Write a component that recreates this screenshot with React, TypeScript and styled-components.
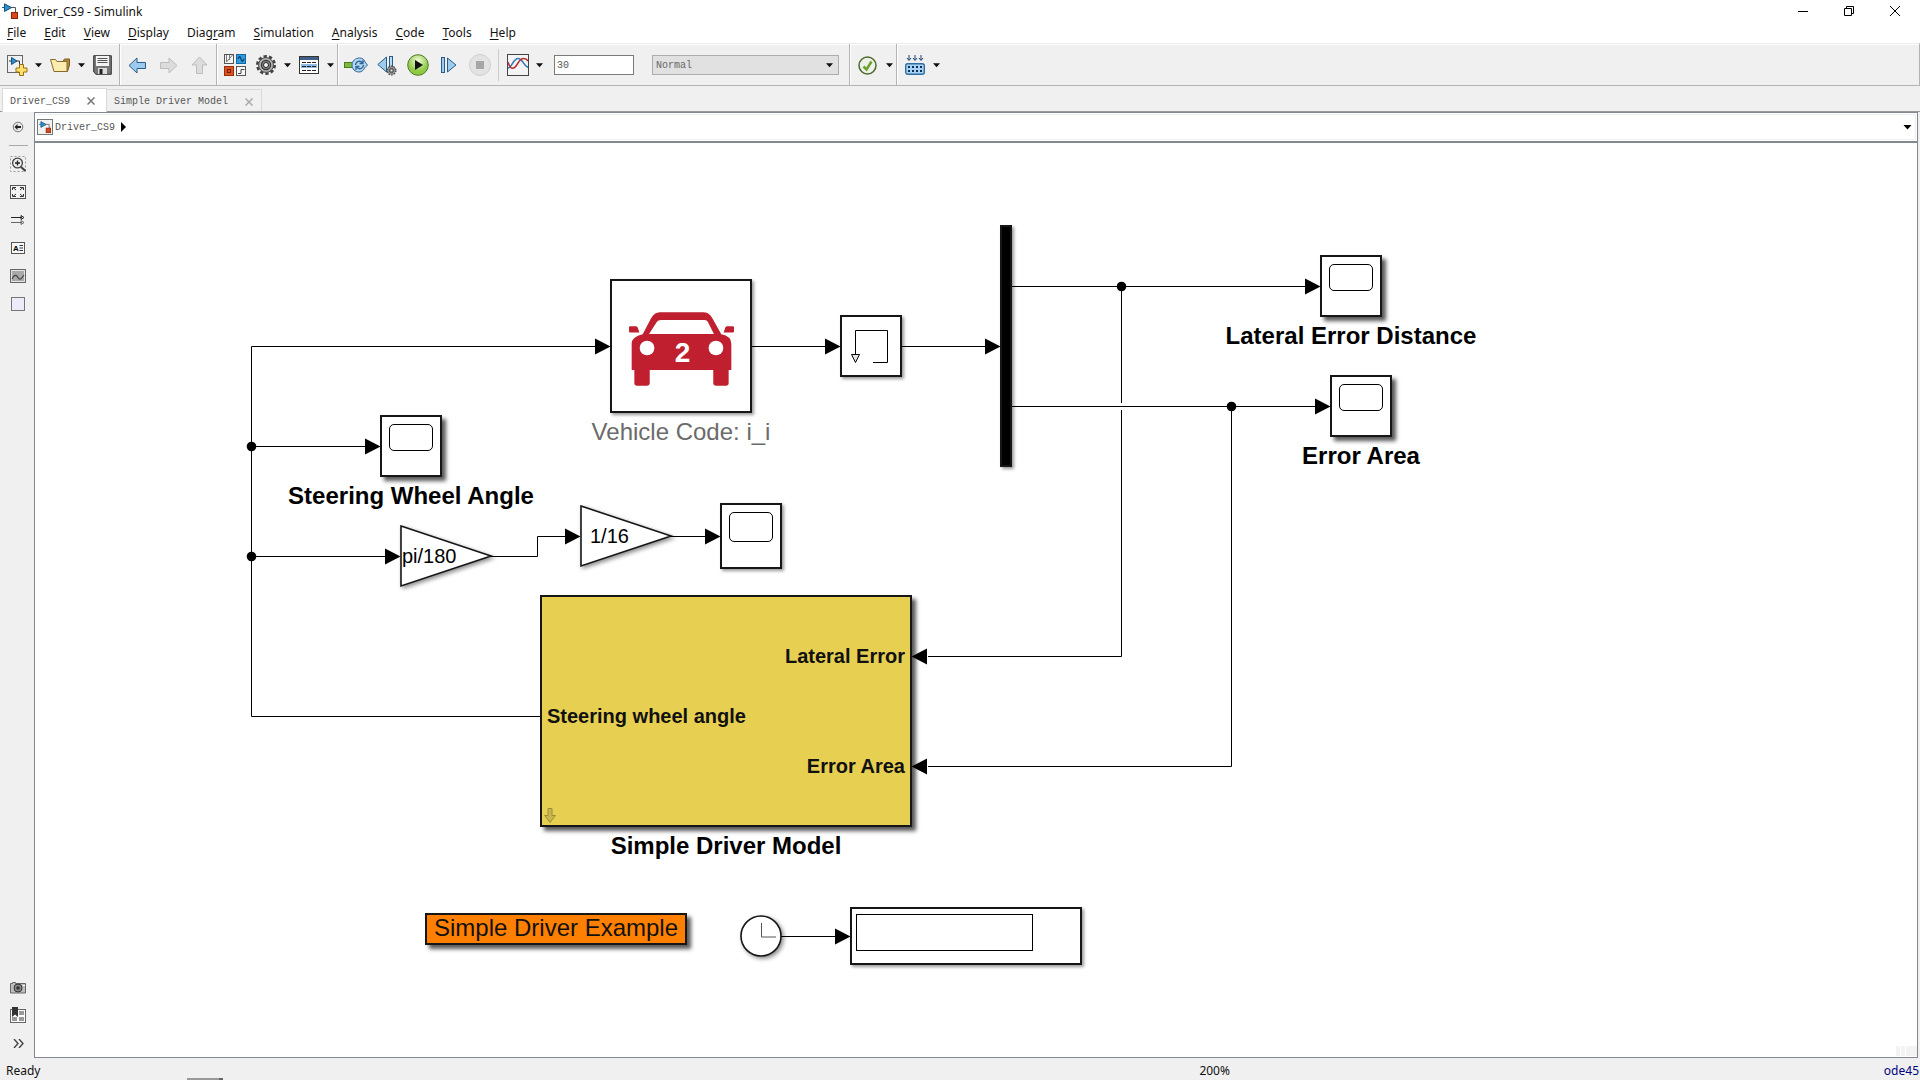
import React from "react";
import styled, { createGlobalStyle, css } from "styled-components";

const uiFont = `"Noto Sans", "Open Sans", sans-serif`;
const monoFont = `"Liberation Mono", "DejaVu Sans Mono", monospace`;
const modelFont = `"Liberation Sans", Arial, sans-serif`;

const GlobalStyle = createGlobalStyle`
  * { box-sizing: border-box; }
  body { margin: 0; background: #f0f0f0; font-family: ${uiFont}; font-size: 12px; color: #111; }
  button, input, select { font: inherit; color: inherit; }
  svg { display: block; }
`;

/* ---------- window frame ---------- */

const Window = styled.div`
  display: flex;
  flex-direction: column;
  height: 100vh;
  overflow: hidden;
  background: #f0f0f0;
`;

const TitleBar = styled.header`
  display: flex;
  align-items: center;
  height: 22px;
  padding: 0 2px;
  background: #fff;
`;

const Title = styled.h1`
  flex: 1;
  margin: 2px 0 0 5px;
  font-size: 12px;
  font-weight: 400;
  line-height: 20px;
`;

const PlainButton = styled.button`
  display: flex;
  align-items: center;
  justify-content: center;
  padding: 0;
  border: 0;
  background: transparent;
`;

const WindowButton = styled(PlainButton)`
  width: 46px;
  height: 20px;
`;

const MenuBar = styled.nav`
  display: flex;
  gap: 18px;
  height: 21px;
  padding: 1px 7px 0;
  background: #fff;
`;

const MenuButton = styled(PlainButton)`
  line-height: 20px;
  u {
    text-underline-offset: 2px;
  }
`;

/* ---------- toolbar ---------- */

const Toolbar = styled.div`
  display: flex;
  height: 43px;
  border-top: 1px solid #ececec;
  border-right: 1px solid #b4b4b4;
  border-bottom: 1px solid #b4b4b4;
  box-shadow: inset 0 1px #fff;
`;

const Group = styled.div<{ $last?: boolean }>`
  display: flex;
  align-items: center;
  padding: 1px 1px 0;
  ${(p) =>
    !p.$last &&
    css`
      border-right: 1px solid #fff;
      box-shadow: inset -1px 0 #b4b4b4;
      padding-right: 2px;
    `}
`;

const ToolButton = styled(PlainButton)`
  width: 31px;
  height: 32px;
`;

const CaretButton = styled(PlainButton)`
  width: 12px;
  height: 32px;
`;

const Divider = styled.span`
  width: 1px;
  height: 32px;
  margin: 0 3px;
  background: #ccc;
`;

const StopTime = styled.input`
  width: 80px;
  height: 20px;
  margin: 0 18px 0 9px;
  padding: 0 2px;
  border: 1px solid #7a7a7a;
  background: #fff;
  color: #555;
  font-family: ${monoFont};
  font-size: 10px;
`;

const ModeBox = styled.div`
  display: grid;
  align-items: center;
  width: 187px;
  height: 20px;
  margin-right: 9px;
  border: 1px solid #adadad;
  background: #e1e1e1;
  & > * {
    grid-area: 1 / 1;
  }
  svg {
    justify-self: end;
    margin-right: 5px;
    pointer-events: none;
  }
`;

const ModeSelect = styled.select`
  width: 100%;
  height: 18px;
  padding: 0 3px;
  border: 0;
  appearance: none;
  background: transparent;
  color: #666;
  font-family: ${monoFont};
  font-size: 10px;
`;

/* ---------- tabs and path ---------- */

const TabStrip = styled.div`
  display: flex;
  align-items: flex-end;
  height: 26px;
  padding-left: 2px;
  box-shadow: inset 0 -1px #999;
`;

const Tab = styled.div<{ $active?: boolean }>`
  display: flex;
  align-items: center;
  justify-content: space-between;
  width: ${(p) => (p.$active ? 105 : 155)}px;
  height: ${(p) => (p.$active ? 24 : 22)}px;
  margin-bottom: ${(p) => (p.$active ? 0 : 1)}px;
  padding: ${(p) => (p.$active ? "1px 11px 0 7px" : "2px 8px 0 7px")};
  border: 1px solid #d9d9d9;
  border-bottom: 0;
  border-left-width: ${(p) => (p.$active ? 1 : 0)}px;
  background: ${(p) => (p.$active ? "#fff" : "#f0f0f0")};
`;

const MonoButton = styled(PlainButton)`
  color: #555;
  font-family: ${monoFont};
  font-size: 10px;
`;

const Body = styled.div`
  display: flex;
  flex: 1;
  min-height: 0;
  padding-right: 2px;
`;

const Palette = styled.aside`
  display: flex;
  flex-direction: column;
  align-items: center;
  gap: 8px;
  width: 34px;
  padding: 5px 0 5px 2px;
`;

const PaletteButton = styled(PlainButton)`
  width: 24px;
  height: 20px;
`;

const PaletteRule = styled.hr`
  width: 19px;
  margin: 0;
  border: 0;
  border-top: 1px solid #aaa;
`;

const Spacer = styled.div`
  flex: 1;
`;

const Editor = styled.main`
  display: flex;
  flex: 1;
  flex-direction: column;
  min-width: 0;
  border: 1px solid #828790;
`;

const PathBar = styled.div`
  height: 30px;
  padding: 1px;
  border-bottom: 2px solid #828790;
  background: #fff;
`;

const PathInner = styled.div`
  display: flex;
  align-items: center;
  height: 26px;
  padding: 0 3px 0 1px;
  border: 1px solid #f0f0f0;
  border-left: 0;
  gap: 2px;
`;

/* ---------- diagram ---------- */

const Canvas = styled.div`
  position: relative;
  flex: 1;
  overflow: hidden;
  background: #fff;
  font-family: ${modelFont};
`;

const Wires = styled.svg`
  position: absolute;
  left: 0;
  top: 0;
`;

const shadows = {
  soft: "2px 2px 3px rgba(0,0,0,.4)",
  deep: "4px 4px 4px rgba(0,0,0,.65)",
};

type Place = { $x: number; $y: number };
type Box = Place & { $w: number; $h: number };

const Block = styled.div<Box & { $shadow?: keyof typeof shadows; $fill?: string }>`
  position: absolute;
  left: ${(p) => p.$x}px;
  top: ${(p) => p.$y}px;
  width: ${(p) => p.$w}px;
  height: ${(p) => p.$h}px;
  border: 2px solid #161616;
  background: ${(p) => p.$fill ?? "#fff"};
  box-shadow: ${(p) => shadows[p.$shadow ?? "soft"]};
`;

const CenteredBlock = styled(Block)`
  display: flex;
  align-items: center;
  justify-content: center;
`;

const VehicleBlock = styled(CenteredBlock)`
  padding-top: 6px;
`;

const ScopeBlock = styled(Block)`
  padding: 7px;
`;

const ScopeScreen = styled.div<{ $h: number }>`
  height: ${(p) => p.$h}px;
  border: 1px solid #000;
  border-radius: 5px;
`;

const DisplayBlock = styled(Block)`
  padding: 5px 4px;
`;

const DisplayValue = styled.output`
  display: block;
  width: 177px;
  height: 37px;
  border: 1px solid #000;
`;

const Annotation = styled(CenteredBlock)`
  padding-bottom: 2px;
  font-size: 24px;
  line-height: 28px;
  color: #111;
`;

const Subsystem = styled(Block)`
  display: flex;
  flex-direction: column;
  padding: 47px 5px 1px;
  font-size: 20px;
  font-weight: 700;
  line-height: 24px;
`;

const Port = styled.div<{ $side: "left" | "right"; $gap: number }>`
  margin-bottom: ${(p) => p.$gap}px;
  text-align: ${(p) => p.$side};
`;

const LinkBadge = styled.svg`
  position: absolute;
  left: 1px;
  bottom: 1px;
`;

const Label = styled.div<Place & { $muted?: boolean }>`
  position: absolute;
  left: ${(p) => p.$x}px;
  top: ${(p) => p.$y}px;
  transform: translateX(-50%);
  font-size: 24px;
  font-weight: ${(p) => (p.$muted ? 400 : 700)};
  line-height: 28px;
  color: ${(p) => (p.$muted ? "#6b6b6b" : "#000")};
  white-space: nowrap;
`;

const GainSvg = styled.svg<Place>`
  position: absolute;
  left: ${(p) => p.$x}px;
  top: ${(p) => p.$y}px;
  overflow: visible;
  polygon,
  circle {
    fill: #fff;
    stroke: #161616;
    stroke-width: 1.6;
    filter: drop-shadow(2px 2px 2px rgba(0, 0, 0, 0.45));
  }
  text {
    font-size: 20px;
    fill: #000;
  }
`;

const Grip = styled.div`
  position: absolute;
  right: 0;
  bottom: 1px;
  display: flex;
  gap: 1px;
  span {
    width: 4px;
    height: 10px;
    background: #f3f3f3;
  }
  span:last-child {
    width: 11px;
  }
`;

/* ---------- status bar ---------- */

const StatusBar = styled.footer`
  position: relative;
  display: grid;
  grid-template-columns: 5fr 3fr;
  align-items: center;
  height: 22px;
  padding: 3px 1px 0 0;
  line-height: 18px;
`;

const Ready = styled.span`
  padding-left: 6px;
`;

const StatusRight = styled.div`
  display: flex;
  justify-content: space-between;
`;

const Solver = styled.a`
  color: #00007f;
  text-decoration: none;
`;

const EdgeMark = styled.div`
  position: absolute;
  left: 187px;
  bottom: 0;
  width: 36px;
  height: 2px;
  background: #999;
  border-right: 4px solid #666;
`;

/* ---------- icons ---------- */

const Caret = ({ w = 8, color = "#111" }: { w?: number; color?: string }) => (
  <svg width={w} height="5" viewBox="0 0 8 5"><path d="M0 0h8L4 4.6z" fill={color} /></svg>
);

const ModelIcon = ({ size = 16, framed }: { size?: number; framed?: boolean }) => (
  <svg width={size} height={size} viewBox="0 0 16 16">
    {framed && <rect x=".5" y=".5" width="15" height="15" fill="#f2f2f2" stroke="#777" />}
    <g transform={framed ? "translate(2 2) scale(.75)" : undefined}>
      <path d="M9 4.500h4.500V10" fill="none" stroke="#555" />
      <path d="M0 4.500h3" stroke="#1d5f91" />
      <path d="M2.500.8 9.500 4.600 2.500 8.500z" fill="#2f8fc8" stroke="#15527f" />
      <rect x="9.500" y="9.500" width="6" height="6" fill="#d9481c" stroke="#8e2407" />
    </g>
  </svg>
);

const Close = ({ color }: { color: string }) => (
  <svg width="8" height="8" viewBox="0 0 8 8"><path d="M.5.5l7 7M7.500.5l-7 7" stroke={color} strokeWidth="1.500" /></svg>
);

const NewIcon = () => (
  <svg width="22" height="22" viewBox="0 0 22 22">
    <rect x="1.500" y="1.500" width="15" height="17" fill="#eef0f2" stroke="#666" />
    <path d="M3 7h4M10 7h3.500v4" fill="none" stroke="#333" />
    <path d="M5.500 3.500 11 7l-5.500 3.500z" fill="#2f8fc8" stroke="#15527f" />
    <path d="M13.500 10.500h4v3.500H21v4h-3.500v3.500h-4V18H10v-4h3.500z" fill="#ffe06a" stroke="#9a6f10" />
  </svg>
);

const FolderIcon = () => (
  <svg width="22" height="20" viewBox="0 0 22 20">
    <path d="M5.500 15.500V6.500h8.500l1.500-2.500h5V10l-2 6.500z" fill="#b08a45" stroke="#7c5d20" />
    <path d="M1.500 4.500h5l1.500 2h10v10H5z" fill="#fbecb0" stroke="#8a6a28" />
  </svg>
);

const SaveIcon = () => (
  <svg width="19" height="20" viewBox="0 0 19 20">
    <path d="M.7.7h17.600v18.600H3L.7 17z" fill="#777" stroke="#333" />
    <rect x="3" y="1" width="13" height="10" fill="#f4f4f4" />
    <path d="M4.500 3.500h10M4.500 5.500h10M4.500 7.500h10" stroke="#555" />
    <rect x="5" y="13" width="9" height="6" fill="#ddd" />
    <rect x="6.500" y="14" width="3" height="5" fill="#222" />
  </svg>
);

const ArrowIcon = ({ turn = 0, on }: { turn?: number; on?: boolean }) => (
  <svg width="19" height="19" viewBox="0 0 19 19">
    <path d="M1 9.500 9 2v4.500h8.500v6H9V17z" transform={`rotate(${turn} 9.500 9.500)`} fill={on ? "#9ccbee" : "#dcdcdc"} stroke={on ? "#2b5c88" : "#bdbdbd"} />
  </svg>
);

const LibraryIcon = () => (
  <svg width="22" height="22" viewBox="0 0 22 22" fill="none">
    <rect x=".5" y=".5" width="9" height="9" fill="#f4f4f4" stroke="#555" /><path d="M2.500 1v7l6-7M5.500 1v5" stroke="#777" />
    <rect x="12.500" y=".5" width="9" height="9" fill="#2f9be0" stroke="#15659e" /><path d="M14 5c1-3 2.500-3 3 0s2 3 3 0" stroke="#0d3f6b" strokeWidth="1.300" />
    <rect x=".5" y="12.500" width="9" height="9" fill="#e0501f" stroke="#96300c" /><rect x="3.500" y="15.500" width="3" height="3" stroke="#6d1f05" />
    <rect x="12.500" y="12.500" width="9" height="9" fill="#f8f8f8" stroke="#555" /><path d="M14 19.500h3v-4h3.500" stroke="#444" />
  </svg>
);

const GearShape = ({ x, y, r }: { x: number; y: number; r: number }) => (
  <g transform={`translate(${x} ${y}) scale(${r / 10})`}>
    <circle r="8.700" fill="none" stroke="#444" strokeWidth="2.600" strokeDasharray="3.300 2.166" />
    <circle r="7.400" fill="#b5b5b5" stroke="#444" />
    <circle r="4.600" fill="#8a8a8a" stroke="#333" strokeWidth="1.200" />
    <circle r="2.500" fill="#f4f4f4" stroke="#222" />
  </g>
);

const GearIcon = () => <svg width="20" height="20" viewBox="0 0 20 20"><GearShape x={10} y={10} r={10} /></svg>;

const ExplorerIcon = () => (
  <svg width="20" height="18" viewBox="0 0 20 18">
    <rect x=".5" y=".5" width="19" height="17" fill="#fff" stroke="#333" />
    <rect x="1" y="1" width="18" height="3" fill="#3f5f86" />
    <rect x="2" y="8" width="16" height="4" fill="#8fbce6" />
    <path d="M3 6.500h14M3 10.500h14M3 14.500h14" stroke="#222" strokeDasharray="4 1" />
  </svg>
);

const UpdateIcon = () => (
  <svg width="24" height="18" viewBox="0 0 24 18">
    <rect x=".5" y="6.500" width="9" height="5" fill="#7cba3c" stroke="#4c7a1c" />
    <path d="M8 9c0-4 3.500-7 7.500-7C19 2 20.500 4 21 6l2.500 3-3 3c-1 2.500-3 4-5.500 4-4 0-7-3-7-7z" fill="#b5d6f1" stroke="#2f6699" />
    <path d="M11.500 9c.5-4 5-5 7-2M19 4v3.500h-3.500M19.500 9c-.5 4-5 5-7 2M12 14v-3.500h3.500" fill="none" stroke="#2f6699" strokeWidth="1.300" />
  </svg>
);

const StepBackIcon = () => (
  <svg width="20" height="21" viewBox="0 0 20 21">
    <path d="M9.500 2v15L.8 9.500z" fill="#9ccbee" stroke="#2b5c88" />
    <rect x="12.500" y="1.500" width="3" height="12" fill="#b9dbf4" stroke="#2b5c88" />
    <GearShape x={14.5} y={15.5} r={5} />
  </svg>
);

const RunIcon = () => (
  <svg width="22" height="22" viewBox="0 0 22 22">
    <defs><radialGradient id="run" cx=".5" cy=".3"><stop offset="0" stopColor="#f2fbdc" /><stop offset="1" stopColor="#8fca45" /></radialGradient></defs>
    <circle cx="11" cy="11" r="10.300" fill="url(#run)" stroke="#4f7d22" />
    <path d="M8 6v10l8-5z" fill="#111" />
  </svg>
);

const StepIcon = () => (
  <svg width="16" height="16" viewBox="0 0 16 16" fill="#9ccbee" stroke="#2b5c88">
    <rect x=".5" y=".5" width="3" height="15" /><path d="M6.500 1v14l8.500-7z" />
  </svg>
);

const StopIcon = () => (
  <svg width="22" height="22" viewBox="0 0 22 22">
    <circle cx="11" cy="11" r="10.500" fill="#e3e3e3" stroke="#cfcfcf" /><rect x="7" y="7" width="8" height="8" fill="#a6a6a6" />
  </svg>
);

const ScopeIcon = () => (
  <svg width="22" height="22" viewBox="0 0 22 22" fill="none">
    <rect x=".5" y=".5" width="21" height="21" fill="#f4f4f4" stroke="#444" />
    <path d="M1 14C5 14 6 4.500 11 4.500s5 7 10 9" stroke="#2d78b7" strokeWidth="1.500" />
    <path d="M1 8c2 7 5 8 8 4s4-8 8-7.500c2 0 3 1 4 2.500" stroke="#b92c2c" strokeWidth="1.500" />
  </svg>
);

const CheckIcon = () => (
  <svg width="19" height="19" viewBox="0 0 19 19">
    <circle cx="9.500" cy="9.500" r="8.500" fill="#eef0ea" stroke="#4c6b2c" strokeWidth="1.500" />
    <path d="M5.500 10.500 8.500 13.500 13.500 5.500" fill="none" stroke="#6ba32a" strokeWidth="2.500" />
  </svg>
);

const BuildIcon = () => (
  <svg width="20" height="20" viewBox="0 0 20 20">
    <path d="M4 0v5M10 0v5M16 0v5M2 3l2 2.500L6 3M8 3l2 2.500L12 3M14 3l2 2.500L18 3" fill="none" stroke="#1c466f" />
    <rect x=".7" y="8.700" width="18.600" height="10.600" rx="2" fill="#a9d3f5" stroke="#2f6ea5" strokeWidth="1.400" />
    <path d="M3 12h14M3 16h14" stroke="#0d2f52" strokeWidth="2" strokeDasharray="2 2" />
  </svg>
);

const BackCircle = () => (
  <svg width="12" height="12" viewBox="0 0 12 12"><circle cx="6" cy="6" r="4.800" fill="#e8e8e8" stroke="#777" /><path d="M2.500 6 5.500 3v2h3.500v2H5.500v2z" fill="#222" /></svg>
);

const ZoomIcon = () => (
  <svg width="16" height="16" viewBox="0 0 16 16" fill="none">
    <rect x=".5" y=".5" width="15" height="15" stroke="#999" strokeDasharray="2 2" />
    <circle cx="7.500" cy="7" r="4.900" fill="#eee" stroke="#444" strokeWidth="1.300" />
    <path d="M5 7h5M7.500 4.500v5" stroke="#222" strokeWidth="1.300" /><path d="M11 11l4.500 4" stroke="#444" strokeWidth="2.200" />
  </svg>
);

const FitIcon = () => (
  <svg width="16" height="14" viewBox="0 0 16 14" fill="none">
    <rect x=".5" y=".5" width="15" height="13" fill="#f4f4f4" stroke="#555" />
    <path d="M6 5 3 2.500M2.500 5V2.500H6M10 5l3-2.500M13.500 5V2.500H10M6 9l-3 2.500M2.500 9v2.500H6M10 9l3 2.500M13.500 9v2.500H10" stroke="#333" />
  </svg>
);

const SignalIcon = () => (
  <svg width="14" height="10" viewBox="0 0 14 10" fill="none">
    <path d="M0 2.500h11M10 .5l3 2-3 2z" stroke="#222" /><path d="M0 7.500h11M10 5.500l3 2-3 2z" stroke="#666" />
  </svg>
);

const TextIcon = () => (
  <svg width="14" height="12" viewBox="0 0 14 12">
    <rect x=".5" y=".5" width="13" height="11" fill="#f7f7f7" stroke="#555" />
    <text x="2" y="9" fontFamily="Liberation Sans, sans-serif" fontSize="8" fontWeight="700">A</text>
    <path d="M8.500 3.500H12M8.500 6H12M8.500 8.500H12" stroke="#333" />
  </svg>
);

const ImageIcon = () => (
  <svg width="16" height="14" viewBox="0 0 16 14">
    <rect x=".5" y=".5" width="15" height="13" fill="#e4e4e4" stroke="#666" /><rect x="2" y="2" width="12" height="10" fill="#a9a9a9" />
    <path d="M2 10c2-4 4-5 6-1.500S12 9 14 6" fill="none" stroke="#444" strokeWidth="1.200" />
  </svg>
);

const AreaIcon = () => <svg width="14" height="14" viewBox="0 0 14 14"><rect x=".5" y=".5" width="13" height="13" fill="#ebebfa" stroke="#777" /></svg>;

const CameraIcon = () => (
  <svg width="16" height="13" viewBox="0 0 16 13">
    <path d="M.5 2.500h2v-1h3v1h10v9.500H.5z" fill="#bdbdbd" stroke="#666" />
    <circle cx="8" cy="7" r="4" fill="#888" stroke="#333" /><circle cx="8" cy="7" r="1.800" fill="#333" /><path d="M13 4.500h2" stroke="#fff" />
  </svg>
);

const BookmarkIcon = () => (
  <svg width="16" height="16" viewBox="0 0 16 16">
    <rect x=".5" y="2.500" width="15" height="13" fill="#fff" stroke="#666" />
    <path d="M9 4h5v4H9zM9 10h5v4H9zM2 10h5v4H2z" fill="#999" /><path d="M2 0h6v10L5 7.500 2 10z" fill="#333" />
  </svg>
);

const MoreIcon = () => <svg width="11" height="9" viewBox="0 0 11 9"><path d="M1 0l4 4.500L1 9M6 0l4 4.500L6 9" fill="none" stroke="#444" strokeWidth="1.400" /></svg>;

/* ---------- diagram parts ---------- */

const Car = () => (
  <svg width="105" height="74" viewBox="206 184 314 220">
    <g fill="#bf1f2e">
      <path fillRule="evenodd" d="M247 250 272 202Q282 184 298 184H428Q445 184 454 200L482 250Q512 256 512 278V357H504V396Q504 404 496 404H467Q458 404 458 396V357H268V396Q268 404 259 404H230Q222 404 222 396V357H214V278Q214 258 247 250ZM266 249H460L442 213Q439 207 432 207H302Q293 207 289 213Z" />
      <path d="M206 229q0-3 4-3h16q4 0 6 4l5 15h-27q-4 0-4-4zM520 229q0-3-4-3h-16q-4 0-6 4l-5 15h27q4 0 4-4z" />
    </g>
    <circle cx="260" cy="291" r="22" fill="#fff" />
    <circle cx="466" cy="291" r="22" fill="#fff" />
    <text x="366" y="333" textAnchor="middle" fontFamily="Liberation Sans, sans-serif" fontWeight="700" fontSize="84" fill="#fff">2</text>
  </svg>
);

const Scope = ({ x, y, tall, deep }: { x: number; y: number; tall?: boolean; deep?: boolean }) => (
  <ScopeBlock $x={x} $y={y} $w={62} $h={tall ? 66 : 62} $shadow={deep ? "deep" : "soft"}>
    <ScopeScreen $h={tall ? 30 : 27} />
  </ScopeBlock>
);

const Gain = ({ x, y, value, tx }: { x: number; y: number; value: string; tx: number }) => (
  <GainSvg $x={x} $y={y} width="92" height="62" viewBox="0 0 92 62">
    <polygon points="1,1 91,31 1,61" />
    <text x={tx} y="38">{value}</text>
  </GainSvg>
);

const wirePaths = [
  "M505.500 573.500H216.500V203.500H562",
  "M216.500 303.500H332",
  "M216.500 413.500H352",
  "M456 413.500H502.500V393.500H532",
  "M636 393.500H672",
  "M717 203.500H792",
  "M867 203.500H952",
  "M977 143.500H1272",
  "M977 263.500H1282",
  "M1086.500 143.500V260M1086.500 267V513.500H893",
  "M1196.500 263.500V623.500H893",
  "M746 793.500H802",
];

const rightHeads: [number, number][] = [
  [575, 203], [345, 303], [365, 413], [545, 393], [685, 393], [805, 203],
  [965, 203], [1285, 143], [1295, 263], [815, 793],
];
const leftHeads: [number, number][] = [[877, 513], [877, 623]];
const branches: [number, number][] = [[216, 303], [216, 413], [1086, 143], [1196, 263]];

const Diagram = () => (
  <Canvas>
    <Label $x={646} $y={275} $muted>Vehicle Code: i_i</Label>
    <Label $x={376} $y={339}>Steering Wheel Angle</Label>
    <Label $x={1316} $y={179}>Lateral Error Distance</Label>
    <Label $x={1326} $y={299}>Error Area</Label>
    <Label $x={691} $y={689}>Simple Driver Model</Label>

    <VehicleBlock $x={575} $y={136} $w={142} $h={134}><Car /></VehicleBlock>
    <CenteredBlock $x={805} $y={172} $w={62} $h={62}>
      <svg width="40" height="40" viewBox="0 0 40 40" fill="none" stroke="#000">
        <path d="M22 36.500H36.500V4.500H4.500V28" /><path d="M.5 28.500h8l-4 8z" fill="#e4e4e4" />
      </svg>
    </CenteredBlock>
    <Block $x={965} $y={82} $w={12} $h={242} $fill="#000" />
    <Scope x={1285} y={112} deep />
    <Scope x={1295} y={232} deep />
    <Scope x={345} y={272} deep />
    <Scope x={685} y={360} tall />
    <Gain x={365} y={382} value="pi/180" tx={2} />
    <Gain x={545} y={362} value="1/16" tx={10} />

    <Subsystem $x={505} $y={452} $w={372} $h={232} $shadow="deep" $fill="#e7cf52">
      <Port $side="right" $gap={36}>Lateral Error</Port>
      <Port $side="left" $gap={26}>Steering wheel angle</Port>
      <Port $side="right" $gap={0}>Error Area</Port>
      <LinkBadge width="14" height="17" viewBox="0 0 14 17" aria-hidden="true">
        <path d="M5 1.500h4v7h3.500L7 15.500 1.500 8.500H5z" fill="#c9b64a" stroke="#9c8c38" />
      </LinkBadge>
    </Subsystem>

    <Annotation $x={390} $y={770} $w={262} $h={32} $shadow="deep" $fill="#ff8000">Simple Driver Example</Annotation>
    <GainSvg $x={705} $y={772} width="42" height="42" viewBox="0 0 42 42">
      <circle cx="21" cy="21" r="20" />
      <path d="M21.500 8v14H36" fill="none" stroke="#555" />
    </GainSvg>
    <DisplayBlock $x={815} $y={764} $w={232} $h={58}><DisplayValue /></DisplayBlock>

    <Wires width="1400" height="900" viewBox="0 0 1400 900" aria-hidden="true">
      {wirePaths.map((d) => <path key={d} d={d} fill="none" stroke="#000" />)}
      {rightHeads.map(([x, y]) => <path key={`${x}-${y}`} d={`M${x + 0.5} ${y + 0.5}l-15.500-8v16z`} />)}
      {leftHeads.map(([x, y]) => <path key={`${x}-${y}`} d={`M${x - 0.5} ${y + 0.5}l15.500-8v16z`} />)}
      {branches.map(([x, y]) => <circle key={`${x}-${y}`} cx={x + 0.5} cy={y + 0.5} r="4.800" />)}
    </Wires>
    <Grip><span /><span /><span /></Grip>
  </Canvas>
);

const menus: [string, number][] = [
  ["File", 0], ["Edit", 0], ["View", 0], ["Display", 0], ["Diagram", 4],
  ["Simulation", 0], ["Analysis", 0], ["Code", 0], ["Tools", 0], ["Help", 0],
];

const Tool = ({ name, children }: { name: string; children: React.ReactNode }) => (
  <ToolButton type="button" aria-label={name}>{children}</ToolButton>
);
const Drop = ({ name }: { name: string }) => (
  <CaretButton type="button" aria-label={`${name} options`}><Caret w={7} /></CaretButton>
);

const paletteTop: [string, React.ReactNode][] = [
  ["Zoom", <ZoomIcon />], ["Fit to view", <FitIcon />], ["Signals", <SignalIcon />],
  ["Annotation", <TextIcon />], ["Image", <ImageIcon />], ["Area", <AreaIcon />],
];
const paletteBottom: [string, React.ReactNode][] = [
  ["Screenshot", <CameraIcon />], ["Bookmarks", <BookmarkIcon />], ["More", <MoreIcon />],
];

export default function App() {
  return (
    <Window>
      <GlobalStyle />
      <TitleBar>
        <ModelIcon />
        <Title>Driver_CS9 - Simulink</Title>
        <WindowButton type="button" aria-label="Minimize">
          <svg width="10" height="10"><path d="M0 5.500h10" stroke="#000" /></svg>
        </WindowButton>
        <WindowButton type="button" aria-label="Restore">
          <svg width="10" height="10" fill="none" stroke="#000"><path d="M.5 2.500h7v7h-7zM2.500 2.500v-2h7v7h-2" /></svg>
        </WindowButton>
        <WindowButton type="button" aria-label="Close">
          <svg width="10" height="10"><path d="M0 0l10 10M10 0 0 10" stroke="#000" /></svg>
        </WindowButton>
      </TitleBar>
      <MenuBar>
        {menus.map(([name, i]) => (
          <MenuButton type="button" key={name}>
            <span>{name.slice(0, i)}<u>{name[i]}</u>{name.slice(i + 1)}</span>
          </MenuButton>
        ))}
      </MenuBar>

      <Toolbar>
        <Group>
          <Tool name="New"><NewIcon /></Tool><Drop name="New" />
          <Tool name="Open"><FolderIcon /></Tool><Drop name="Open" />
          <Tool name="Save"><SaveIcon /></Tool>
        </Group>
        <Group>
          <Tool name="Back"><ArrowIcon on /></Tool>
          <Tool name="Forward"><ArrowIcon turn={180} /></Tool>
          <Tool name="Up"><ArrowIcon turn={90} /></Tool>
        </Group>
        <Group>
          <Tool name="Library"><LibraryIcon /></Tool>
          <Tool name="Settings"><GearIcon /></Tool><Drop name="Settings" />
          <Tool name="Explorer"><ExplorerIcon /></Tool><Drop name="Explorer" />
        </Group>
        <Group>
          <Tool name="Update"><UpdateIcon /></Tool>
          <Tool name="Step back"><StepBackIcon /></Tool>
          <Tool name="Run"><RunIcon /></Tool>
          <Tool name="Step forward"><StepIcon /></Tool>
          <Tool name="Stop"><StopIcon /></Tool>
          <Divider />
          <Tool name="Data inspector"><ScopeIcon /></Tool><Drop name="Data inspector" />
          <StopTime aria-label="Stop time" defaultValue="30" />
          <ModeBox>
            <ModeSelect aria-label="Simulation mode"><option>Normal</option></ModeSelect>
            <Caret w={7} />
          </ModeBox>
        </Group>
        <Group>
          <Tool name="Check"><CheckIcon /></Tool><Drop name="Check" />
        </Group>
        <Group $last>
          <Tool name="Build"><BuildIcon /></Tool><Drop name="Build" />
        </Group>
      </Toolbar>

      <TabStrip>
        <Tab $active>
          <MonoButton type="button">Driver_CS9</MonoButton>
          <PlainButton type="button" aria-label="Close Driver_CS9"><Close color="#777" /></PlainButton>
        </Tab>
        <Tab>
          <MonoButton type="button">Simple Driver Model</MonoButton>
          <PlainButton type="button" aria-label="Close Simple Driver Model"><Close color="#aaa" /></PlainButton>
        </Tab>
      </TabStrip>

      <Body>
        <Palette>
          <PaletteButton type="button" aria-label="Hide browser"><BackCircle /></PaletteButton>
          <PaletteRule />
          {paletteTop.map(([name, icon]) => <PaletteButton type="button" key={name} aria-label={name}>{icon}</PaletteButton>)}
          <Spacer />
          {paletteBottom.map(([name, icon]) => <PaletteButton type="button" key={name} aria-label={name}>{icon}</PaletteButton>)}
        </Palette>
        <Editor>
          <PathBar>
            <PathInner>
              <ModelIcon framed />
              <MonoButton type="button">Driver_CS9</MonoButton>
              <svg width="14" height="10" viewBox="0 0 14 10"><path d="M4 0l5 5-5 5z" /></svg>
              <Spacer />
              <PlainButton type="button" aria-label="Path history"><Caret w={9} color="#000" /></PlainButton>
            </PathInner>
          </PathBar>
          <Diagram />
        </Editor>
      </Body>

      <StatusBar>
        <Ready>Ready</Ready>
        <StatusRight>
          <span>200%</span>
          <Solver href="#solver">ode45</Solver>
        </StatusRight>
        <EdgeMark />
      </StatusBar>
    </Window>
  );
}
